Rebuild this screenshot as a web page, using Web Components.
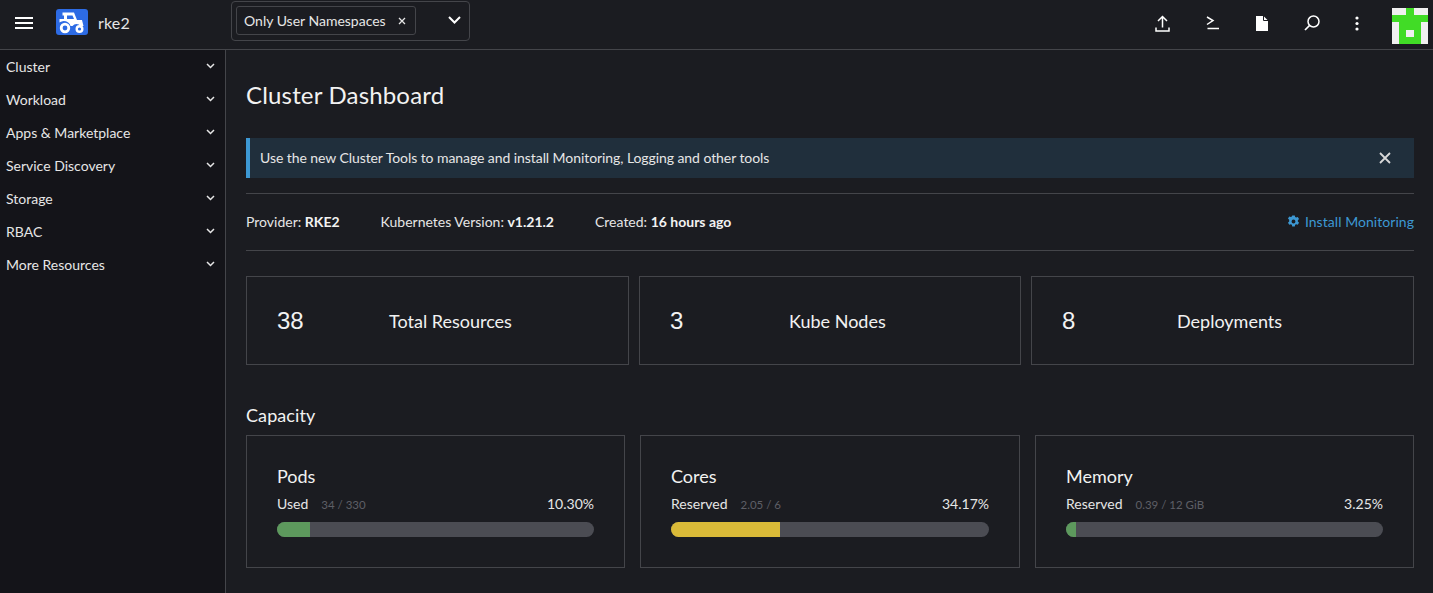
<!DOCTYPE html>
<html>
<head>
<meta charset="utf-8">
<style>
  html, body { margin: 0; height: 100%; background: #1b1c21; overflow: hidden; }
  body { font: 14px Lato, "Liberation Sans", sans-serif; color: #e6e6e6; }
</style>
</head>
<body>
<app-shell>
  <top-bar slot="header"></top-bar>
  <side-nav slot="nav">
    <nav-group>Cluster</nav-group>
    <nav-group>Workload</nav-group>
    <nav-group>Apps &amp; Marketplace</nav-group>
    <nav-group>Service Discovery</nav-group>
    <nav-group>Storage</nav-group>
    <nav-group>RBAC</nav-group>
    <nav-group>More Resources</nav-group>
  </side-nav>
  <dash-page>
    <info-banner>Use the new Cluster Tools to manage and install Monitoring, Logging and other tools</info-banner>
    <meta-row></meta-row>
    <div class="counts" slot="counts">
      <count-card value="38" label="Total Resources" style="--label-x:112px"></count-card>
      <count-card value="3" label="Kube Nodes" style="--label-x:119px"></count-card>
      <count-card value="8" label="Deployments" style="--label-x:115px"></count-card>
    </div>
    <capacity-card slot="capacity" title="Pods" kind="Used" amount="34 / 330" percent="10.30" color="#5d995d"></capacity-card>
    <capacity-card slot="capacity" title="Cores" kind="Reserved" amount="2.05 / 6" percent="34.17" color="#daba38"></capacity-card>
    <capacity-card slot="capacity" title="Memory" kind="Reserved" amount="0.39 / 12 GiB" percent="3.25" color="#5d995d"></capacity-card>
  </dash-page>
</app-shell>

<script>
class AppShell extends HTMLElement {
  constructor() {
    super()
    this.attachShadow({ mode: 'open' })
    this.shadowRoot.innerHTML = `
      <style>
        :host { display: grid; grid-template-columns: 226px 1fr; grid-template-rows: 50px 1fr; height: 593px; }
        header { grid-column: 1 / 3; border-bottom: 1px solid #44454a; }
        nav { background: #141419; border-right: 1px solid #44454a; }
        main { min-width: 0; }
      </style>
      <header><slot name="header"></slot></header>
      <nav><slot name="nav"></slot></nav>
      <main><slot></slot></main>
    `
  }
}

class TopBar extends HTMLElement {
  constructor() {
    super()
    this.attachShadow({ mode: 'open' })
    this.shadowRoot.innerHTML = `
      <style>
        :host { display: flex; align-items: flex-start; height: 49px; box-sizing: border-box; }
        svg { display: block; }
        .menu { margin: 16px 0 0 15px; width: 18px; height: 14px; }
        .logo { margin: 9px 0 0 23px; }
        .name { margin: 13px 0 0 10px; font-size: 16px; line-height: 20px; width: 133px; letter-spacing: .15px; }
        .filter { margin-top: 1px; width: 239px; height: 40px; box-sizing: border-box; border: 1px solid #44454a; border-radius: 4px; display: flex; align-items: center; padding: 0 7px 0 4px; }
        .chip { height: 29px; width: 180px; box-sizing: border-box; border: 1px solid #44454a; border-radius: 3px; display: flex; align-items: center; padding: 0 7px; gap: 12px; white-space: nowrap; margin-top: -1px; }
        .arrow { margin-left: auto; margin-right: 1px; margin-top: -2px; }
        .tools { margin-left: auto; display: flex; align-items: center; height: 46px; }
        .tool { width: 50px; display: flex; justify-content: center; }
        .tools .search { margin-right: 6px; }
        .tools .last { width: 28px; }
        .avatar { margin: 5px 5px 0 21px; }
      </style>
      <svg class="menu" viewBox="0 0 18 14"><path d="M0 1h18v2H0zM0 6h18v2H0zM0 11h18v2H0z" fill="#fff"/></svg>
      <svg class="logo" width="32" height="26" viewBox="0 0 32 26">
        <rect width="32" height="26" rx="3" fill="#2d6be4"/>
        <path d="M6.500 3.500H18l3 7.500h5l1.500 6h-3a5 5 0 0 0-8 0h-2a7 7 0 0 0-11-3.500V10H8V6.500H6.500zM11 6.500V10h7l-1.500-3.500z" fill="#fff" fill-rule="evenodd"/>
        <circle cx="9" cy="19" r="3.800" fill="#2d6be4" stroke="#fff" stroke-width="2.800"/>
        <circle cx="23.500" cy="20" r="2.800" fill="#2d6be4" stroke="#fff" stroke-width="2.400"/>
      </svg>
      <div class="name">rke2</div>
      <div class="filter">
        <div class="chip">Only User Namespaces
          <svg width="8" height="8" viewBox="0 0 8 8"><path d="M1 1l6 6M7 1l-6 6" stroke="#e6e6e6" stroke-width="1.300" fill="none"/></svg>
        </div>
        <svg class="arrow" width="13" height="8" viewBox="0 0 13 8"><path d="M1 1l5.500 5.500L12 1" stroke="#fff" stroke-width="2" fill="none"/></svg>
      </div>
      <div class="tools">
        <div class="tool"><svg width="15" height="17" viewBox="0 0 15 17"><path d="M7.500 12.500V1.500M3 6l4.500-4.500L12 6M1 12.500V16h13v-3.500" stroke="#fff" stroke-width="1.500" fill="none"/></svg></div>
        <div class="tool"><svg width="13" height="14" viewBox="0 0 13 14"><path d="M1 1l6 3.500L1 8.500M1.500 12.500H13" stroke="#fff" stroke-width="1.500" fill="none"/></svg></div>
        <div class="tool"><svg width="12" height="15" viewBox="0 0 12 15"><path d="M0 0h7.500L12 4.500V15H0z" fill="#fff"/><path d="M7.500 0v4.500H12" fill="none" stroke="#1b1c21"/></svg></div>
        <div class="tool search"><svg width="16" height="16" viewBox="0 0 16 16"><circle cx="9.500" cy="6.500" r="5.500" stroke="#fff" stroke-width="1.500" fill="none"/><path d="M5.500 10.500L1 15" stroke="#fff" stroke-width="1.700"/></svg></div>
        <div class="tool last"><svg width="4" height="15" viewBox="0 0 4 15"><circle cx="2" cy="2" r="1.600" fill="#fff"/><circle cx="2" cy="7.500" r="1.600" fill="#fff"/><circle cx="2" cy="13" r="1.600" fill="#fff"/></svg></div>
        <svg class="avatar" width="36" height="36" viewBox="0 0 5 5" shape-rendering="crispEdges">
          <rect width="5" height="5" fill="#f0f0f0"/>
          <path d="M2 0h1v1h2v1H4v3H1V2H0V1h2z" fill="#41dc26"/>
          <rect x="2" y="3" width="1" height="1" fill="#f0f0f0"/>
        </svg>
      </div>
    `
  }
}

class SideNav extends HTMLElement {
  constructor() {
    super()
    this.attachShadow({ mode: 'open' })
    this.shadowRoot.innerHTML = `
      <style>:host { display: block; }</style>
      <slot></slot>
    `
  }
}

class NavGroup extends HTMLElement {
  constructor() {
    super()
    this.attachShadow({ mode: 'open' })
    this.shadowRoot.innerHTML = `
      <style>
        :host { display: flex; align-items: center; justify-content: space-between; height: 33px; padding: 0 10px 0 6px; }
        svg { display: block; margin-top: -2px; }
      </style>
      <span><slot></slot></span>
      <svg width="9" height="6" viewBox="0 0 9 6"><path d="M1 1l3.500 3.500L8 1" stroke="#e6e6e6" stroke-width="1.500" fill="none"/></svg>
    `
  }
}

class DashPage extends HTMLElement {
  constructor() {
    super()
    this.attachShadow({ mode: 'open' })
    this.shadowRoot.innerHTML = `
      <style>
        :host { display: block; padding: 0 19px 0 20px; }
        h1 { margin: 0; padding-top: 29px; height: 59px; font-size: 24px; font-weight: 400; line-height: 32px; color: #f2f2f2; letter-spacing: .17px; }
        ::slotted(.counts) { display: grid; grid-template-columns: 383px 382px 383px; column-gap: 10px; margin-top: 25px; }
        h2 { margin: 0; padding-top: 39px; height: 31px; font-size: 18px; font-weight: 400; line-height: 22px; color: #f2f2f2; letter-spacing: .08px; }
        .capacity { display: grid; grid-template-columns: 379px 380px 379px; column-gap: 15px; }
      </style>
      <h1>Cluster Dashboard</h1>
      <slot></slot>
      <slot name="counts"></slot>
      <h2>Capacity</h2>
      <div class="capacity"><slot name="capacity"></slot></div>
    `
  }
}

class InfoBanner extends HTMLElement {
  constructor() {
    super()
    this.attachShadow({ mode: 'open' })
    this.shadowRoot.innerHTML = `
      <style>
        :host { display: flex; align-items: center; justify-content: space-between; height: 40px; box-sizing: border-box; background: #202f3c; border-left: 4px solid #3d98d3; padding: 0 23px 2px 10px; letter-spacing: -.07px; }
        svg { display: block; margin-top: 2px; }
      </style>
      <span><slot></slot></span>
      <svg width="12" height="12" viewBox="0 0 12 12"><path d="M1 1l10 10M11 1L1 11" stroke="#d8d8d8" stroke-width="1.800" fill="none"/></svg>
    `
  }
}

class MetaRow extends HTMLElement {
  constructor() {
    super()
    this.attachShadow({ mode: 'open' })
    this.shadowRoot.innerHTML = `
      <style>
        :host { display: flex; align-items: center; height: 54px; padding-bottom: 2px; margin-top: 15px; border-top: 1px solid #44454a; border-bottom: 1px solid #44454a; }
        b { font-weight: 700; color: #f2f2f2; }
        span { margin-right: 41px; }
        a { margin-left: auto; color: #3d98d3; display: flex; align-items: center; gap: 5px; letter-spacing: .05px; }
        svg { display: block; }
      </style>
      <span>Provider: <b>RKE2</b></span>
      <span>Kubernetes Version: <b>v1.21.2</b></span>
      <span>Created: <b>16 hours ago</b></span>
      <a>
        <svg width="13" height="13" viewBox="0 0 12 12"><path fill="#3d98d3" fill-rule="evenodd" d="M4.800.4h2.400l.3 1.500 1 .5 1.400-.6 1.200 2-1.100 1v1.300l1.100 1-1.200 2-1.400-.6-1 .5-.3 1.600H4.800l-.3-1.600-1-.5-1.400.6-1.200-2 1.100-1V4.300l-1.100-1 1.200-2 1.400.6 1-.5zM6 4.200a1.800 1.800 0 1 0 0 3.600 1.800 1.800 0 0 0 0-3.600z"/></svg>
        Install Monitoring
      </a>
    `
  }
}

class CountCard extends HTMLElement {
  constructor() {
    super()
    this.attachShadow({ mode: 'open' })
    this.shadowRoot.innerHTML = `
      <style>
        :host { display: flex; align-items: center; height: 89px; box-sizing: border-box; border: 1px solid #44454a; padding-left: 30px; }
        .value { font: 24px "Liberation Sans", sans-serif; width: var(--label-x); color: #f2f2f2; flex: none; }
        .label { font-size: 18px; color: #f2f2f2; }
      </style>
      <div class="value"></div>
      <div class="label"></div>
    `
  }

  connectedCallback() {
    this.shadowRoot.querySelector('.value').textContent = this.getAttribute('value')
    this.shadowRoot.querySelector('.label').textContent = this.getAttribute('label')
  }
}

class CapacityCard extends HTMLElement {
  constructor() {
    super()
    this.attachShadow({ mode: 'open' })
    this.shadowRoot.innerHTML = `
      <style>
        :host { display: block; height: 133px; box-sizing: border-box; border: 1px solid #44454a; padding: 29px 30px 0; }
        h3 { margin: 0; font-size: 18px; font-weight: 400; line-height: 22px; color: #f2f2f2; }
        .row { display: flex; align-items: baseline; margin-top: 8px; line-height: 17px; }
        .amount { margin-left: 13px; font-size: 11.500px; color: #5e5f66; }
        .percent { margin-left: auto; }
        .track { height: 15px; margin-top: 9px; background: #4b4c53; border-radius: 8px; overflow: hidden; }
        .fill { height: 100%; }
      </style>
      <h3></h3>
      <div class="row"><span class="kind"></span><span class="amount"></span><span class="percent"></span></div>
      <div class="track"><div class="fill"></div></div>
    `
  }

  connectedCallback() {
    const $ = (s) => this.shadowRoot.querySelector(s)
    $('h3').textContent = this.getAttribute('title')
    $('.kind').textContent = this.getAttribute('kind')
    $('.amount').textContent = this.getAttribute('amount')
    $('.percent').textContent = this.getAttribute('percent') + '%'
    $('.fill').style.width = this.getAttribute('percent') + '%'
    $('.fill').style.background = this.getAttribute('color')
  }
}

customElements.define('app-shell', AppShell)
customElements.define('top-bar', TopBar)
customElements.define('side-nav', SideNav)
customElements.define('nav-group', NavGroup)
customElements.define('dash-page', DashPage)
customElements.define('info-banner', InfoBanner)
customElements.define('meta-row', MetaRow)
customElements.define('count-card', CountCard)
customElements.define('capacity-card', CapacityCard)
</script>
</body>
</html>
